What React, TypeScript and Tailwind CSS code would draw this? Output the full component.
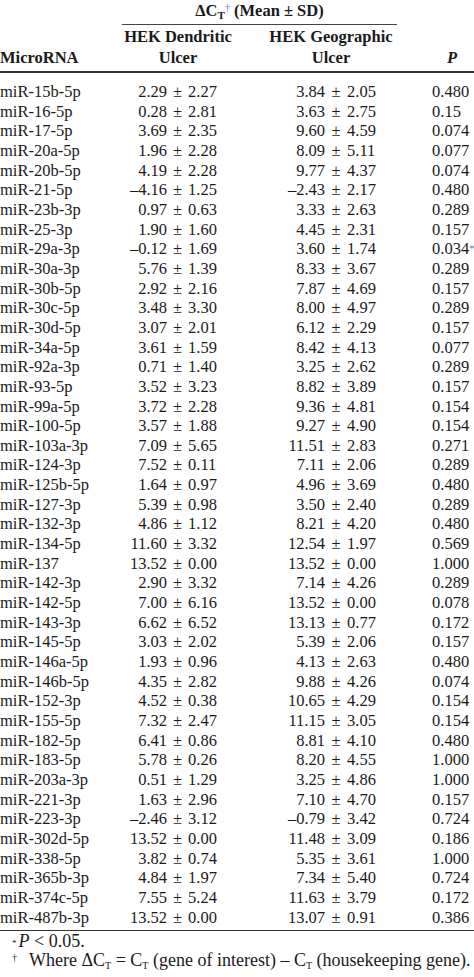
import React from 'react'

// [microRNA, dendritic mean, dendritic sd, geographic mean, geographic sd, P]
const rows: [string, string, string, string, string, string][] = [
  ['miR-15b-5p', '2.29', '2.27', '3.84', '2.05', '0.480'],
  ['miR-16-5p', '0.28', '2.81', '3.63', '2.75', '0.15'],
  ['miR-17-5p', '3.69', '2.35', '9.60', '4.59', '0.074'],
  ['miR-20a-5p', '1.96', '2.28', '8.09', '5.11', '0.077'],
  ['miR-20b-5p', '4.19', '2.28', '9.77', '4.37', '0.074'],
  ['miR-21-5p', '–4.16', '1.25', '–2.43', '2.17', '0.480'],
  ['miR-23b-3p', '0.97', '0.63', '3.33', '2.63', '0.289'],
  ['miR-25-3p', '1.90', '1.60', '4.45', '2.31', '0.157'],
  ['miR-29a-3p', '–0.12', '1.69', '3.60', '1.74', '0.034*'],
  ['miR-30a-3p', '5.76', '1.39', '8.33', '3.67', '0.289'],
  ['miR-30b-5p', '2.92', '2.16', '7.87', '4.69', '0.157'],
  ['miR-30c-5p', '3.48', '3.30', '8.00', '4.97', '0.289'],
  ['miR-30d-5p', '3.07', '2.01', '6.12', '2.29', '0.157'],
  ['miR-34a-5p', '3.61', '1.59', '8.42', '4.13', '0.077'],
  ['miR-92a-3p', '0.71', '1.40', '3.25', '2.62', '0.289'],
  ['miR-93-5p', '3.52', '3.23', '8.82', '3.89', '0.157'],
  ['miR-99a-5p', '3.72', '2.28', '9.36', '4.81', '0.154'],
  ['miR-100-5p', '3.57', '1.88', '9.27', '4.90', '0.154'],
  ['miR-103a-3p', '7.09', '5.65', '11.51', '2.83', '0.271'],
  ['miR-124-3p', '7.52', '0.11', '7.11', '2.06', '0.289'],
  ['miR-125b-5p', '1.64', '0.97', '4.96', '3.69', '0.480'],
  ['miR-127-3p', '5.39', '0.98', '3.50', '2.40', '0.289'],
  ['miR-132-3p', '4.86', '1.12', '8.21', '4.20', '0.480'],
  ['miR-134-5p', '11.60', '3.32', '12.54', '1.97', '0.569'],
  ['miR-137', '13.52', '0.00', '13.52', '0.00', '1.000'],
  ['miR-142-3p', '2.90', '3.32', '7.14', '4.26', '0.289'],
  ['miR-142-5p', '7.00', '6.16', '13.52', '0.00', '0.078'],
  ['miR-143-3p', '6.62', '6.52', '13.13', '0.77', '0.172'],
  ['miR-145-5p', '3.03', '2.02', '5.39', '2.06', '0.157'],
  ['miR-146a-5p', '1.93', '0.96', '4.13', '2.63', '0.480'],
  ['miR-146b-5p', '4.35', '2.82', '9.88', '4.26', '0.074'],
  ['miR-152-3p', '4.52', '0.38', '10.65', '4.29', '0.154'],
  ['miR-155-5p', '7.32', '2.47', '11.15', '3.05', '0.154'],
  ['miR-182-5p', '6.41', '0.86', '8.81', '4.10', '0.480'],
  ['miR-183-5p', '5.78', '0.26', '8.20', '4.55', '1.000'],
  ['miR-203a-3p', '0.51', '1.29', '3.25', '4.86', '1.000'],
  ['miR-221-3p', '1.63', '2.96', '7.10', '4.70', '0.157'],
  ['miR-223-3p', '–2.46', '3.12', '–0.79', '3.42', '0.724'],
  ['miR-302d-5p', '13.52', '0.00', '11.48', '3.09', '0.186'],
  ['miR-338-5p', '3.82', '0.74', '5.35', '3.61', '1.000'],
  ['miR-365b-3p', '4.84', '1.97', '7.34', '5.40', '0.724'],
  ['miR-374c-5p', '7.55', '5.24', '11.63', '3.79', '0.172'],
  ['miR-487b-3p', '13.52', '0.00', '13.07', '0.91', '0.386'],
]

function PValue({ value }: { value: string }) {
  if (!value.endsWith('*')) return <span>{value}</span>
  return (
    <span>
      {value.slice(0, -1)}
      <sup className="text-[10px] text-[#4a6fd0] relative -top-[2px]">*</sup>
    </span>
  )
}

export default function App() {
  return (
    <div
      className="w-[474px] h-[977px] overflow-hidden bg-white text-[#1a1a1a] text-[16.5px]"
      style={{ fontFamily: '"Liberation Serif", "Times New Roman", serif' }}
    >
      {/* Header */}
      <div className="border-b-2 border-[#333]">
        <div className="ml-[122px] w-[275px] h-[25px] border-b border-[#444] text-center font-bold leading-[22px]">
          ΔC<sub className="text-[11px]">T</sub>
          <sup className="text-[10px] text-[#4a6fd0] font-normal">†</sup> (Mean ± SD)
        </div>
        <div className="flex items-end font-bold leading-[21px] pt-[1px] pb-[3px]">
          <div className="w-[122px]">MicroRNA</div>
          <div className="w-[112px] text-center">
            HEK Dendritic
            <br />
            Ulcer
          </div>
          <div className="w-[194px] text-center">
            HEK Geographic
            <br />
            Ulcer
          </div>
          <div className="pl-[19px] italic">P</div>
        </div>
      </div>

      {/* Body */}
      <div className="pt-[9px] pb-[3px] border-b-[1.5px] border-[#333]">
        {rows.map(([name, m1, s1, m2, s2, p]) => (
          <div
            key={name}
            className="grid grid-cols-[100px_67px_21px_62px_75px_22px_85px_1fr] h-[19.67px] leading-[19.67px] whitespace-nowrap"
          >
            <span>{name}</span>
            <span className="text-right">{m1}</span>
            <span className="text-center">±</span>
            <span>{s1}</span>
            <span className="text-right">{m2}</span>
            <span className="text-center">±</span>
            <span>{s2}</span>
            <PValue value={p} />
          </div>
        ))}
      </div>

      {/* Footnotes */}
      <div className="pl-[12px] pt-[1px] text-[18px] leading-[19px] whitespace-nowrap">
        <div>
          <sup className="text-[9px] relative -top-[1px]">*</sup>
          <span className="italic ml-[2px]">P</span> &lt; 0.05.
        </div>
        <div>
          <sup className="text-[10px]">†</sup>
          <span className="ml-[12px]">
            Where ΔC<sub className="text-[10px]">T</sub> = C<sub className="text-[10px]">T</sub> (gene of
            interest) – C<sub className="text-[10px]">T</sub> (housekeeping gene).
          </span>
        </div>
      </div>
    </div>
  )
}
